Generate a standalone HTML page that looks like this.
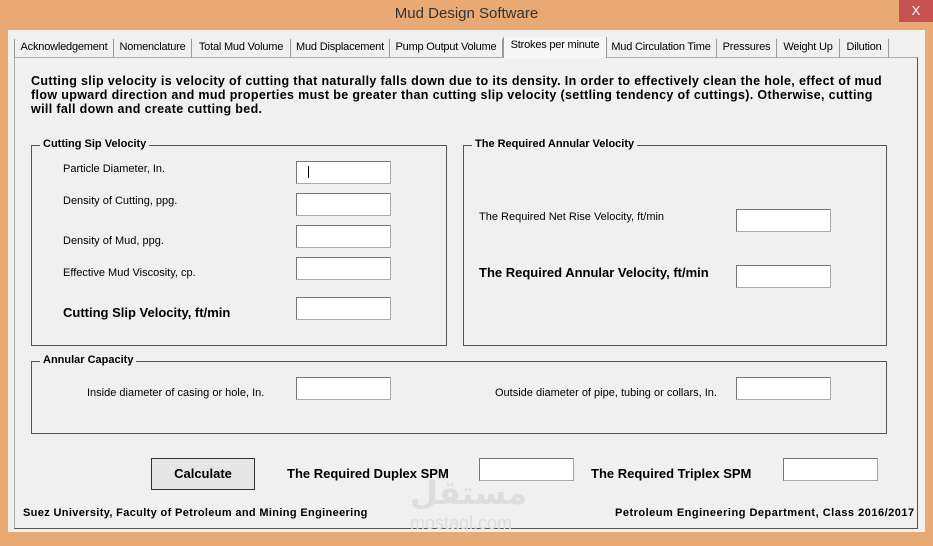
<html><head><style>
body{margin:0;width:933px;height:546px;background:#E9A974;font-family:"Liberation Sans",sans-serif;position:relative;overflow:hidden}
.a{position:absolute}
.t{font-size:11px;color:#000;white-space:nowrap}
.b{font-weight:bold}
.in{position:absolute;background:#fff;border:1px solid #aaa;border-top-color:#777;border-left-color:#777;box-sizing:border-box}
.fr{position:absolute;border:1px solid #555;box-sizing:border-box}
.lg{position:absolute;background:#f0f0f0;padding:0 3px;font-size:11px;font-weight:bold;top:-8px;left:8px;white-space:nowrap}
.tab{position:absolute;top:39px;height:18px;font-size:11px;line-height:17px;text-align:center;border-right:1px solid #999;background:#f0f0f0;white-space:nowrap;letter-spacing:-0.2px}
</style></head><body>
<div class="a" style="left:0;top:5px;width:933px;text-align:center;font-size:15px;color:#333">Mud Design Software</div>
<div class="a" style="left:899px;top:0;width:34px;height:22px;background:#C75050;color:#fff;text-align:center;font-size:13px;line-height:22px">X</div>
<div class="a" style="left:8px;top:30px;width:917px;height:502px;background:#f0f0f0"></div>
<div class="a" style="left:14px;top:39px;width:1px;height:18px;background:#999"></div>
<div class="tab" style="left:15px;width:98px">Acknowledgement</div>
<div class="tab" style="left:114px;width:77px">Nomenclature</div>
<div class="tab" style="left:192px;width:98px">Total Mud Volume</div>
<div class="tab" style="left:291px;width:98px">Mud Displacement</div>
<div class="tab" style="left:390px;width:112px">Pump Output Volume</div>
<div class="tab" style="left:503px;width:102px;top:37px;height:21px;line-height:17px;background:#f6f6f6;z-index:2;border-left:1px solid #999">Strokes per minute</div>
<div class="tab" style="left:606px;width:110px">Mud Circulation Time</div>
<div class="tab" style="left:717px;width:59px">Pressures</div>
<div class="tab" style="left:777px;width:62px">Weight Up</div>
<div class="tab" style="left:840px;width:48px">Dilution</div>
<div class="a" style="left:14px;top:57px;width:904px;height:472px;border:1px solid #aaa;border-right-color:#555;border-bottom-color:#555;box-sizing:border-box"></div>
<div class="a t b" style="left:31px;top:74px;font-size:12.5px;line-height:14px;letter-spacing:0.35px">Cutting slip velocity is velocity of cutting that naturally falls down due to its density. In order to effectively clean the hole, effect of mud<br>flow upward direction and mud properties must be greater than cutting slip velocity (settling tendency of cuttings). Otherwise, cutting<br>will fall down and create cutting bed.</div>
<div class="fr" style="left:31px;top:145px;width:416px;height:201px"><span class="lg">Cutting Sip Velocity</span></div>
<div class="fr" style="left:463px;top:145px;width:424px;height:201px"><span class="lg">The Required Annular Velocity</span></div>
<div class="fr" style="left:31px;top:361px;width:856px;height:73px"><span class="lg">Annular Capacity</span></div>
<div class="a t" style="left:63px;top:163px">Particle Diameter, In.</div>
<div class="a t" style="left:63px;top:195px">Density of Cutting, ppg.</div>
<div class="a t" style="left:63px;top:235px">Density of Mud, ppg.</div>
<div class="a t" style="left:63px;top:267px">Effective Mud Viscosity, cp.</div>
<div class="a t b" style="left:63px;top:305px;font-size:13px">Cutting Slip Velocity, ft/min</div>
<div class="in" style="left:296px;top:161px;width:95px;height:23px"><div style="position:absolute;left:11px;top:4px;width:1px;height:12px;background:#000"></div></div>
<div class="in" style="left:296px;top:193px;width:95px;height:23px"></div>
<div class="in" style="left:296px;top:225px;width:95px;height:23px"></div>
<div class="in" style="left:296px;top:257px;width:95px;height:23px"></div>
<div class="in" style="left:296px;top:297px;width:95px;height:23px"></div>
<div class="a t" style="left:479px;top:211px">The Required Net Rise Velocity, ft/min</div>
<div class="a t b" style="left:479px;top:265px;font-size:13px">The Required Annular Velocity, ft/min</div>
<div class="in" style="left:736px;top:209px;width:95px;height:23px"></div>
<div class="in" style="left:736px;top:265px;width:95px;height:23px"></div>
<div class="a t" style="left:87px;top:387px">Inside diameter of casing or hole, In.</div>
<div class="in" style="left:296px;top:377px;width:95px;height:23px"></div>
<div class="a t" style="left:495px;top:387px">Outside diameter of pipe, tubing or collars, In.</div>
<div class="in" style="left:736px;top:377px;width:95px;height:23px"></div>
<div class="a" style="left:151px;top:458px;width:104px;height:32px;border:1px solid #333;background:#e6e6e6;box-sizing:border-box;text-align:center;line-height:30px;font-size:13px;font-weight:bold">Calculate</div>
<div class="a t b" style="left:287px;top:466px;font-size:13px">The Required Duplex SPM</div>
<div class="in" style="left:479px;top:458px;width:95px;height:23px"></div>
<div class="a t b" style="left:591px;top:466px;font-size:13px">The Required Triplex SPM</div>
<div class="in" style="left:783px;top:458px;width:95px;height:23px"></div>
<div class="a t b" style="left:23px;top:507px;letter-spacing:0.35px">Suez University, Faculty of Petroleum and Mining Engineering</div>
<div class="a t b" style="left:615px;top:507px;letter-spacing:0.5px">Petroleum Engineering Department, Class 2016/2017</div>
<div class="a" style="left:410px;top:474px;font-size:32px;font-weight:bold;color:#ddd;font-family:'DejaVu Sans',sans-serif">مستقل</div>
<div class="a" style="left:410px;top:513px;font-size:18px;color:#ddd;font-family:'Liberation Sans',sans-serif">mostaql.com</div>
</body></html>
